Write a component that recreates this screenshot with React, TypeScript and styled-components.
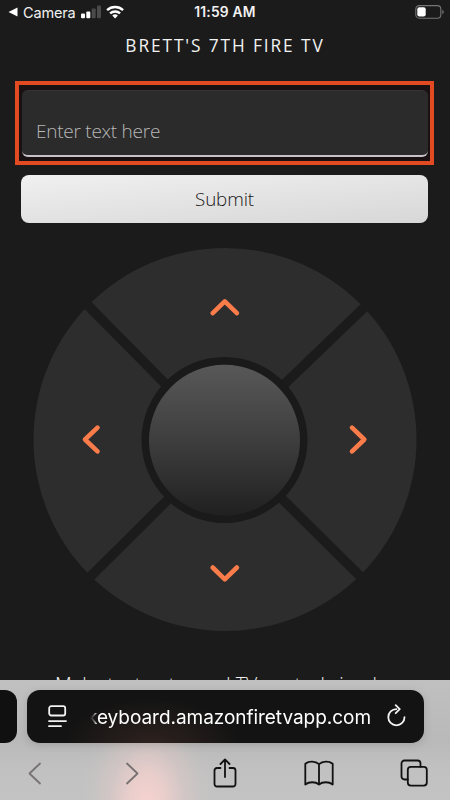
import React from "react";
import styled, { createGlobalStyle } from "styled-components";

const GlobalStyle = createGlobalStyle`
  *, *::before, *::after { box-sizing: border-box; }
  body { margin: 0; background: #1b1b1b; }
  button, input { font: inherit; border: 0; margin: 0; }
`;

const ui = `Inter, "Liberation Sans", sans-serif`;
const ember = `"Open Sans", "Noto Sans", sans-serif`;

const Screen = styled.div`
  width: 450px;
  height: 800px;
  overflow: hidden;
  display: flex;
  flex-direction: column;
  background: #1b1b1b;
  color: #f2f2f2;
  font-family: ${ember};
`;

const StatusBar = styled.header`
  height: 24px;
  flex: none;
  display: grid;
  grid-template-columns: 1fr auto 1fr;
  align-items: center;
  padding: 0 6px 0 8px;
  font-family: ${ui};
`;

const BackToApp = styled.div`
  display: flex;
  align-items: center;
  height: 24px;
  font-size: 14.5px;
  letter-spacing: -0.15px;
  svg { flex: none; }
`;

const AppName = styled.span`
  margin: 0 5px 0 5px;
`;

const Clock = styled.time`
  font-size: 13.8px;
  font-weight: 600;
  letter-spacing: 0.2px;
  margin-right: 2px;
`;

const BatterySlot = styled.div`
  display: flex;
  justify-content: flex-end;
`;

const Title = styled.h1`
  margin: 10px 0 0;
  height: 24px;
  line-height: 24px;
  text-align: center;
  font-size: 17.3px;
  font-weight: 400;
  letter-spacing: 1.9px;
`;

const Highlight = styled.div`
  width: 419px;
  height: 84px;
  margin: 23px 0 0 15px;
  padding: 5px 2px 3px 3px;
  border: 4px solid #e24a22;
  background: #1a1212;
  flex: none;
`;

const TextField = styled.input`
  display: block;
  width: 406px;
  height: 67px;
  padding: 16px 14px 0;
  border-radius: 6px;
  border-top: 1px solid #343434;
  border-bottom: 2px solid #c8c2c8;
  background: #2b2b2b;
  color: #eee;
  font-size: 19px;
  font-weight: 340;
  letter-spacing: -0.25px;
  outline: none;
  &::placeholder { color: #b8b8b8; opacity: 1; }
`;

const SubmitButton = styled.button`
  width: 407px;
  height: 48px;
  flex: none;
  margin: 10px 0 0 21px;
  border-radius: 8px;
  background: linear-gradient(175deg, #f0f0f0, #d7d7d7);
  color: #181818;
  font-size: 18.8px;
  letter-spacing: -0.1px;
  font-weight: 350;
  padding: 0;
`;

const Remote = styled.svg`
  width: 450px;
  height: 408px;
  flex: none;
  display: block;
  margin-top: 17px;
`;

const Caption = styled.p`
  margin: 26px 0 0;
  height: 6px;
  overflow: hidden;
  flex: none;
  padding-left: 55px;
  font-size: 19.4px;
  letter-spacing: 0.1px;
  font-weight: 300;
  line-height: 22px;
  white-space: nowrap;
`;

const BrowserChrome = styled.footer`
  height: 120px;
  flex: none;
  padding-top: 10px;
  background:
    radial-gradient(ellipse 72px 108px at 147px 122px, #f6d2cf 0%, rgba(243, 209, 206, 0.8) 25%, rgba(232, 204, 200, 0.4) 52%, rgba(215, 200, 197, 0.12) 78%, rgba(200, 195, 194, 0) 100%),
    linear-gradient(#c0c0c0 0, #b9b9b9 60px, #c1c1c1 90px, #c3c3c3 100%);
  font-family: ${ui};
`;

const TabStrip = styled.div`
  display: flex;
  gap: 10px;
`;

const PreviousTab = styled.div`
  width: 17px;
  height: 53px;
  border-radius: 0 12px 12px 0;
  background: #101010;
`;

const AddressBar = styled.div`
  width: 397px;
  height: 53px;
  display: flex;
  align-items: center;
  padding: 0 17px 0 21px;
  border-radius: 13px;
  background:
    radial-gradient(ellipse 90px 50px at 125px 58px, #30231f, rgba(26, 21, 19, 0) 100%),
    #131313;
  box-shadow: 0 2px 9px rgba(0, 0, 0, 0.13);
  svg { flex: none; }
`;

const Url = styled.div`
  width: 281px;
  margin: 1px auto 0 23px;
  display: flex;
  justify-content: flex-end;
  overflow: hidden;
  white-space: nowrap;
  color: #fff;
  font-size: 19px;
  letter-spacing: -0.04px;
  mask-image: linear-gradient(90deg, transparent, rgba(0, 0, 0, 0.35) 4px, #000 7px);
`;

const Reload = styled.div`
  padding-bottom: 2px;
`;

const Toolbar = styled.nav`
  display: flex;
  justify-content: space-between;
  align-items: center;
  height: 60px;
  padding: 0 20px 0 19px;
`;

const ToolButton = styled.button<{ $muted?: boolean }>`
  width: 32px;
  height: 36px;
  padding: 0;
  display: grid;
  place-items: center;
  background: none;
  color: ${(p) => (p.$muted ? "#777272" : "#111")};
`;

const Line = styled.svg`
  display: block;
  fill: none;
  stroke: currentColor;
  stroke-width: 1.8;
  stroke-linecap: round;
  stroke-linejoin: round;
`;

export default function App() {
  return (
    <>
      <GlobalStyle />
      <Screen>
        <StatusBar>
          <BackToApp>
            <svg width="10" height="10" viewBox="0 0 10 10"><path d="M.5 5 9.5.6v8.8z" fill="#fff" /></svg>
            <AppName>Camera</AppName>
            <svg width="20" height="14" viewBox="0 0 20 14">
              <rect x="0" y="8.5" width="4" height="4.7" rx="1" fill="#fff" />
              <rect x="5.3" y="6.4" width="4" height="6.8" rx="1" fill="#fff" />
              <rect x="10.7" y="3.4" width="4" height="9.8" rx="1" fill="#4a4a4a" />
              <rect x="16" y="0.5" width="4" height="12.7" rx="1" fill="#4a4a4a" />
            </svg>
            <svg width="28" height="14" viewBox="0 0 28 14">
              <g fill="none" stroke="#fff" strokeWidth="2.4">
                <path d="M6.1 5.1a12 12 0 0 1 16 0" />
                <path d="M9.1 8.4a7.4 7.4 0 0 1 10 0" />
              </g>
              <path d="m14.1 13.4-2.8-3a4.2 4.2 0 0 1 5.6 0z" fill="#fff" />
            </svg>
          </BackToApp>
          <Clock>11:59 AM</Clock>
          <BatterySlot>
            <svg width="29" height="14" viewBox="0 0 29 14">
              <rect x=".8" y=".6" width="25" height="12.6" rx="3.4" fill="none" stroke="#767676" strokeWidth="1.1" />
              <rect x="2.3" y="2.2" width="8.4" height="9.4" rx="2" fill="#fff" />
              <path d="M27.3 4.8q1.5.7 1.5 2.2t-1.5 2.2z" fill="#767676" />
            </svg>
          </BatterySlot>
        </StatusBar>

        <Title>BRETT'S 7TH FIRE TV</Title>

        <Highlight>
          <TextField placeholder="Enter text here" />
        </Highlight>
        <SubmitButton>Submit</SubmitButton>

        <Remote viewBox="0 240 450 408">
          <defs>
            <linearGradient id="knob" x1="0" y1="0" x2="0" y2="1">
              <stop offset="0" stopColor="#585858" />
              <stop offset="0.5" stopColor="#3e3e3e" />
              <stop offset="1" stopColor="#202020" />
            </linearGradient>
          </defs>
          <circle cx="225" cy="439.5" r="191.5" fill="#2d2d2d" />
          <g stroke="#1b1b1b" strokeWidth="9.6">
            <path d="M180 398.6 80 297.5M270 398l102-98M267 484l102 101M184 483.6 81 586" />
          </g>
          <circle cx="224.5" cy="440" r="83" fill="#1a1a1a" />
          <circle cx="224.5" cy="440.3" r="75.5" fill="url(#knob)" />
          <g fill="none" stroke="#fa7c4b" strokeWidth="4.6" strokeLinecap="round" strokeLinejoin="round">
            <path d="m212.7 313.2 12.1-11.8 12.1 11.8" />
            <path d="m212.7 567.5 12.1 11.8 12.1-11.8" />
            <path d="M97.5 427.6 85 439.5l12.5 11.9" />
            <path d="m352 427.6 12.3 11.9L352 451.4" />
          </g>
        </Remote>

        <Caption>Make text entry and TV control simpler</Caption>

        <BrowserChrome>
          <TabStrip>
            <PreviousTab />
            <AddressBar>
              <Line width="19" height="23" viewBox="0 0 19 23">
                <rect x="1.2" y="1.2" width="16" height="9.3" rx="2" />
                <path d="M1 16.1h17M1 21.2h12" />
              </Line>
              <Url>keyboard.amazonfiretvapp.com</Url>
              <Reload>
                <Line width="21" height="23" viewBox="0 0 21 23">
                  <path d="M10.4 5.1a8.100 8.100 0 1 0 8.100 8.100M9.700 1.200l4 4-4 4" />
                </Line>
              </Reload>
            </AddressBar>
          </TabStrip>
          <Toolbar>
            <ToolButton $muted aria-label="Back">
              <Line width="14" height="23" viewBox="0 0 14 23"><path d="M12 1.5 1.5 11.5l10.5 10" /></Line>
            </ToolButton>
            <ToolButton $muted aria-label="Forward">
              <Line width="20" height="23" viewBox="0 0 20 23"><path d="m7 1.5 10.5 10-10.5 10" /></Line>
            </ToolButton>
            <ToolButton aria-label="Share">
              <Line width="24" height="30" viewBox="0 0 24 30">
                <path d="M7.5 10H4a2.5 2.5 0 0 0-2.5 2.5V26A2.5 2.5 0 0 0 4 28.5h16a2.5 2.5 0 0 0 2.5-2.5V12.5A2.5 2.5 0 0 0 20 10h-3.5M12 19V1.5M7.5 6 12 1.5 16.5 6" />
              </Line>
            </ToolButton>
            <ToolButton aria-label="Bookmarks">
              <Line width="30" height="26" viewBox="0 0 30 26">
                <path d="M15 4.2v20.3M15 4.2C11.5 1 5 .8 1.3 3.8v20.7C5 21.5 11.5 21.5 15 24.5c3.5-3 10-3 13.7 0V3.8C25 .8 18.5 1 15 4.2z" />
              </Line>
            </ToolButton>
            <ToolButton aria-label="Tabs">
              <Line width="28" height="28" viewBox="0 0 28 28">
                <rect x="7.8" y="7.8" width="19" height="18.8" rx="3" />
                <path d="M7.8 20.5H4.5a3 3 0 0 1-3-3v-13a3 3 0 0 1 3-3h13a3 3 0 0 1 3 3v3.3" />
              </Line>
            </ToolButton>
          </Toolbar>
        </BrowserChrome>
      </Screen>
    </>
  );
}
